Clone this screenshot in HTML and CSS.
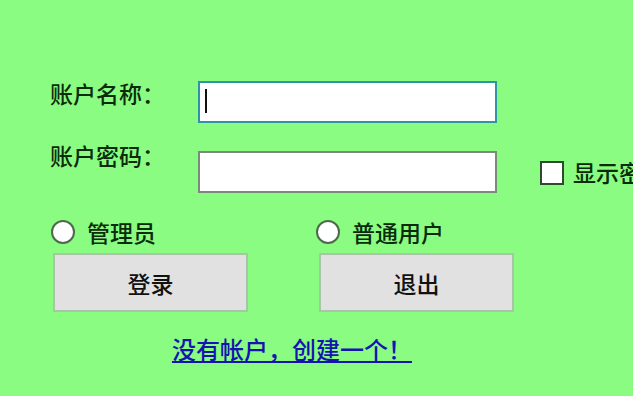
FILE: index.html
```html
<!DOCTYPE html>
<html lang="zh-CN">
<head>
<meta charset="utf-8">
<title>登录</title>
<link rel="stylesheet" href="styles.css">
</head>
<body>
<div class="window">
  <div class="row row-name">
    <label class="label">账户名称：</label>
    <div class="input input-focus"><span class="caret"></span></div>
  </div>
  <div class="row row-pass">
    <label class="label">账户密码：</label>
    <div class="input input-pass"></div>
    <div class="check">
      <span class="checkbox"></span>
      <span class="check-text">显示密码</span>
    </div>
  </div>
  <div class="row row-radio">
    <div class="radio-item radio-admin">
      <span class="radio"></span>
      <span class="radio-text">管理员</span>
    </div>
    <div class="radio-item radio-user">
      <span class="radio"></span>
      <span class="radio-text">普通用户</span>
    </div>
  </div>
  <div class="row row-buttons">
    <div class="button button-login">登录</div>
    <div class="button button-exit">退出</div>
  </div>
  <div class="row row-link">
    <a class="link" href="#">没有帐户，创建一个！</a>
  </div>
</div>
</body>
</html>
```
FILE: styles.css
```css
html, body {
  margin: 0;
  padding: 0;
}
body {
  width: 633px;
  height: 396px;
  overflow: hidden;
  background: #89fc81;
  font-family: "Noto Sans CJK SC", "Noto Sans", sans-serif;
  font-weight: 500;
  color: #0a2c0a;
}
.window {
  width: 633px;
  height: 396px;
  overflow: hidden;
  display: flex;
  flex-direction: column;
}
.row {
  display: flex;
  align-items: flex-start;
  flex-shrink: 0;
}
.label {
  width: 148px;
  flex-shrink: 0;
  font-size: 23px;
  line-height: 23px;
  white-space: nowrap;
}
.row-name {
  margin-top: 81px;
  padding-left: 50px;
}
.row-name .label {
  margin-top: 1px;
}
.input {
  box-sizing: border-box;
  width: 299px;
  height: 42px;
  background: #ffffff;
  border: 2px solid #7b8a7b;
  position: relative;
  flex-shrink: 0;
}
.input-focus {
  border-color: #2f95a6;
}
.caret {
  position: absolute;
  left: 5px;
  top: 6px;
  width: 2px;
  height: 24px;
  background: #111;
}
.row-pass {
  margin-top: 21px;
  padding-left: 50px;
}
.input-pass {
  margin-top: 7px;
}
.check {
  display: flex;
  align-items: center;
  margin-left: 43px;
  margin-top: 16px;
  white-space: nowrap;
  flex-shrink: 0;
}
.checkbox {
  box-sizing: border-box;
  width: 24px;
  height: 24px;
  background: #fff;
  border: 2px solid #2e4a2e;
  flex-shrink: 0;
}
.check-text {
  margin-left: 9px;
  font-size: 23px;
  line-height: 25px;
}
.row-radio {
  margin-top: 26px;
  padding-left: 51px;
}
.radio-item {
  display: flex;
  align-items: center;
  flex-shrink: 0;
}
.radio-admin {
  width: 265px;
}
.radio {
  box-sizing: border-box;
  width: 24px;
  height: 24px;
  border-radius: 50%;
  background: #fff;
  border: 2px solid #4d6a4d;
  flex-shrink: 0;
}
.radio-text {
  margin-left: 12px;
  font-size: 23px;
  line-height: 26px;
}
.row-buttons {
  margin-top: 8px;
  padding-left: 53px;
  gap: 71px;
}
.button {
  box-sizing: border-box;
  width: 195px;
  height: 59px;
  flex-shrink: 0;
  background: #e1e1e1;
  border: 2px solid #a9c4a6;
  display: flex;
  align-items: center;
  justify-content: center;
  font-size: 23px;
  color: #111;
}
.row-link {
  margin-top: 24px;
  padding-left: 172px;
}
.link {
  font-size: 24px;
  line-height: 26px;
  color: #1414b0;
  text-decoration: underline;
  text-decoration-thickness: 2px;
  text-underline-offset: 2px;
}
```
